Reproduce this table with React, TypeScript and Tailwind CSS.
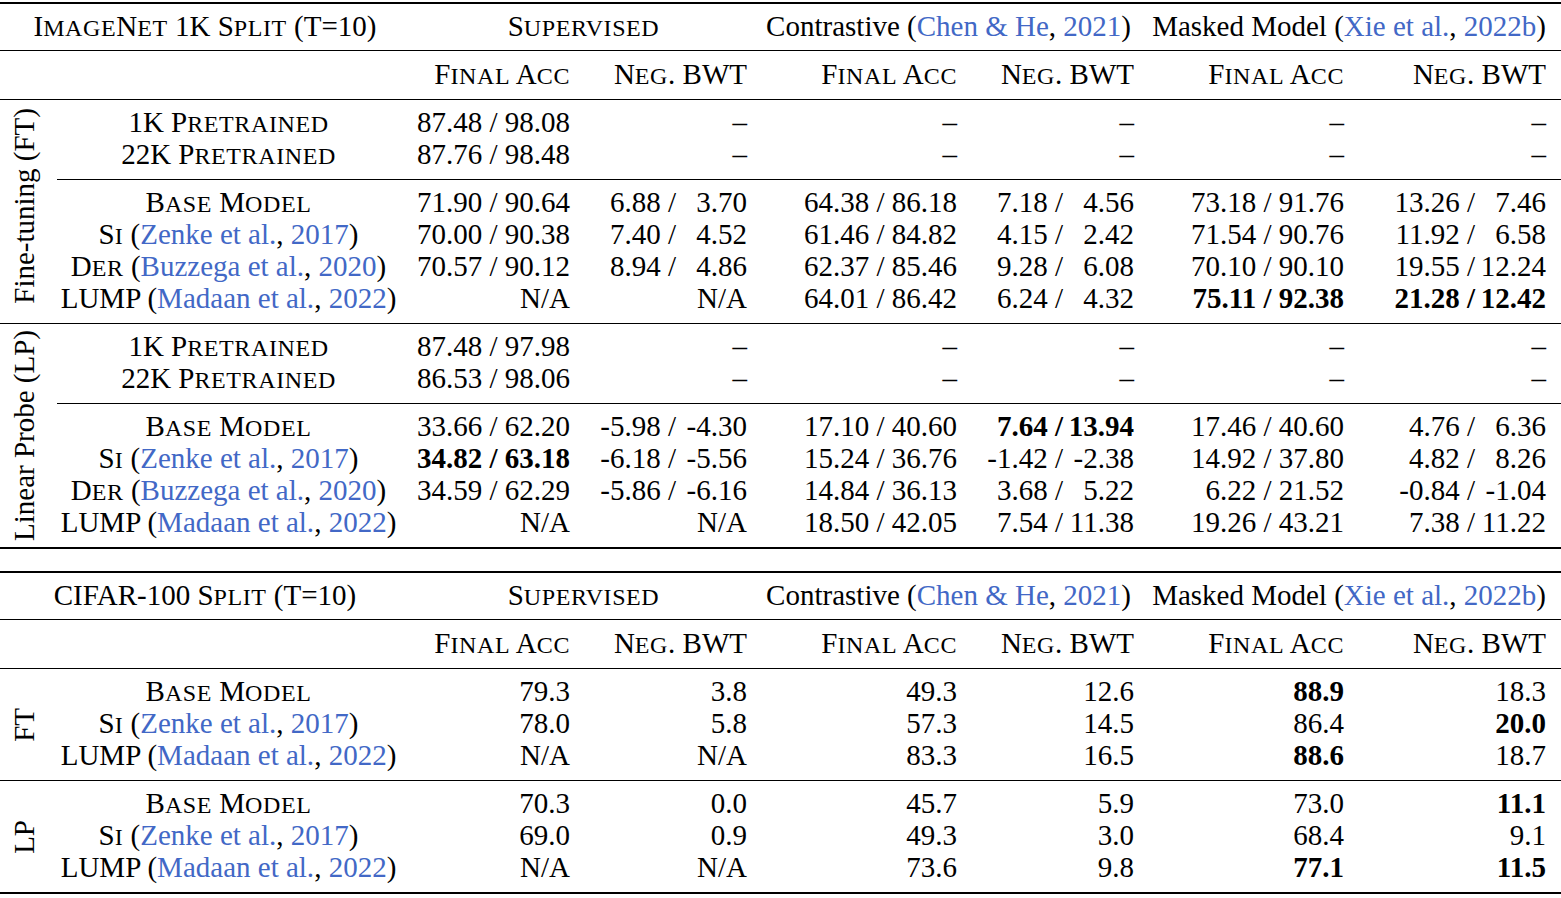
import React from 'react'

type Row = { label: React.ReactNode; cells: string[] }

const BLUE = 'text-[#4268c6]'

// small caps, the way LaTeX sets them: capitals full size, the rest as smaller capitals
function SC({ t }: { t: string }) {
  const parts = t.split(/([a-z]+)/)
  return (
    <>
      {parts.map((p, i) =>
        /^[a-z]+$/.test(p) ? (
          <span key={i} className="text-[24px] uppercase tracking-[0.6px]">
            {p}
          </span>
        ) : (
          <span key={i}>{p}</span>
        )
      )}
    </>
  )
}

function Cite({ who, year }: { who: string; year: string }) {
  return (
    <>
      {' ('}
      <span className={BLUE}>{who}</span>
      {', '}
      <span className={BLUE}>{year}</span>
      {')'}
    </>
  )
}

const si = (
  <>
    <SC t="Si" />
    <Cite who="Zenke et al." year="2017" />
  </>
)
const der = (
  <>
    <SC t="Der" />
    <Cite who="Buzzega et al." year="2020" />
  </>
)
const lump = (
  <>
    LUMP
    <Cite who="Madaan et al." year="2022" />
  </>
)
const base = <SC t="Base Model" />
const pre1k = <SC t="1K Pretrained" />
const pre22k = <SC t="22K Pretrained" />

const D = '–'

const ftTop: Row[] = [
  { label: pre1k, cells: ['87.48 / 98.08', D, D, D, D, D] },
  { label: pre22k, cells: ['87.76 / 98.48', D, D, D, D, D] },
]
const ftBottom: Row[] = [
  { label: base, cells: ['71.90 / 90.64', '6.88 / 3.70', '64.38 / 86.18', '7.18 / 4.56', '73.18 / 91.76', '13.26 / 7.46'] },
  { label: si, cells: ['70.00 / 90.38', '7.40 / 4.52', '61.46 / 84.82', '4.15 / 2.42', '71.54 / 90.76', '11.92 / 6.58'] },
  { label: der, cells: ['70.57 / 90.12', '8.94 / 4.86', '62.37 / 85.46', '9.28 / 6.08', '70.10 / 90.10', '19.55 / 12.24'] },
  { label: lump, cells: ['N/A', 'N/A', '64.01 / 86.42', '6.24 / 4.32', '*75.11 / 92.38', '*21.28 / 12.42'] },
]
const lpTop: Row[] = [
  { label: pre1k, cells: ['87.48 / 97.98', D, D, D, D, D] },
  { label: pre22k, cells: ['86.53 / 98.06', D, D, D, D, D] },
]
const lpBottom: Row[] = [
  { label: base, cells: ['33.66 / 62.20', '-5.98 / -4.30', '17.10 / 40.60', '*7.64 / 13.94', '17.46 / 40.60', '4.76 / 6.36'] },
  { label: si, cells: ['*34.82 / 63.18', '-6.18 / -5.56', '15.24 / 36.76', '-1.42 / -2.38', '14.92 / 37.80', '4.82 / 8.26'] },
  { label: der, cells: ['34.59 / 62.29', '-5.86 / -6.16', '14.84 / 36.13', '3.68 / 5.22', '6.22 / 21.52', '-0.84 / -1.04'] },
  { label: lump, cells: ['N/A', 'N/A', '18.50 / 42.05', '7.54 / 11.38', '19.26 / 43.21', '7.38 / 11.22'] },
]
const cifarFt: Row[] = [
  { label: base, cells: ['79.3', '3.8', '49.3', '12.6', '*88.9', '18.3'] },
  { label: si, cells: ['78.0', '5.8', '57.3', '14.5', '86.4', '*20.0'] },
  { label: lump, cells: ['N/A', 'N/A', '83.3', '16.5', '*88.6', '18.7'] },
]
const cifarLp: Row[] = [
  { label: base, cells: ['70.3', '0.0', '45.7', '5.9', '73.0', '*11.1'] },
  { label: si, cells: ['69.0', '0.9', '49.3', '3.0', '68.4', '9.1'] },
  { label: lump, cells: ['N/A', 'N/A', '73.6', '9.8', '*77.1', '*11.5'] },
]

const colW = ['w-[160px]', 'w-[177px]', 'w-[210px]', 'w-[177px]', 'w-[210px]', 'w-[202px]']

function Cell({ v, idx }: { v: string; idx: number }) {
  const bold = v.startsWith('*')
  const text = bold ? v.slice(1) : v
  const isBwt = idx % 2 === 1
  if (isBwt && text.includes(' / ')) {
    const [a, b] = text.split(' / ')
    return (
      <div className={`${colW[idx]} flex justify-end ${bold ? 'font-bold' : ''}`}>
        <span className="whitespace-pre">{a} /</span>
        <span className="w-[71px] text-right">{b}</span>
      </div>
    )
  }
  return <div className={`${colW[idx]} text-right whitespace-pre ${bold ? 'font-bold' : ''}`}>{text}</div>
}

function DataRow({ row }: { row: Row }) {
  return (
    <div className="flex h-8 leading-8">
      <div className="w-[363px] text-center whitespace-nowrap">{row.label}</div>
      {row.cells.map((c, i) => (
        <Cell key={i} v={c} idx={i} />
      ))}
    </div>
  )
}

function Rows({ rows }: { rows: Row[] }) {
  return (
    <div className="pt-[6px] pb-[9px]">
      {rows.map((r, i) => (
        <DataRow key={i} row={r} />
      ))}
    </div>
  )
}

function Block({ side, parts, lift }: { side: string; parts: Row[][]; lift?: boolean }) {
  return (
    <div className="flex">
      <div className="w-[47px] flex items-center justify-center">
        <div className={`[writing-mode:vertical-rl] rotate-180 leading-8 whitespace-nowrap ${lift ? 'mb-[12px]' : ''}`}>
          {side}
        </div>
      </div>
      <div className="flex-1">
        {parts.map((p, i) => (
          <div key={i}>
            {i > 0 && <div className="ml-[10px] h-px bg-black" />}
            <Rows rows={p} />
          </div>
        ))}
      </div>
    </div>
  )
}

function Header({ title }: { title: string }) {
  return (
    <>
      <div className="h-[2px] bg-black" />
      <div className="flex h-8 leading-8 mt-[6px] mb-[8px] whitespace-nowrap">
        <div className="w-[410px] text-center">
          <SC t={title} />
        </div>
        <div className="w-[337px] text-center pl-[10px]">
          <SC t="Supervised" />
        </div>
        <div className="w-[387px] text-right pr-[3px]">
          Contrastive
          <Cite who="Chen & He" year="2021" />
        </div>
        <div className="w-[412px] text-right">
          Masked Model
          <Cite who="Xie et al." year="2022b" />
        </div>
      </div>
      <div className="h-px bg-black" />
      <div className="flex h-8 leading-8 mt-[7px] mb-[9px] whitespace-nowrap">
        <div className="w-[410px]" />
        {colW.map((w, i) => (
          <div key={i} className={`${w} text-right`}>
            <SC t={i % 2 === 0 ? 'Final Acc' : 'Neg. BWT'} />
          </div>
        ))}
      </div>
      <div className="h-px bg-black" />
    </>
  )
}

export default function App() {
  return (
    <div className="w-[1561px] h-[898px] bg-white text-black text-[29px] font-['Liberation_Serif','Times_New_Roman',serif] overflow-hidden">
      <div className="pt-[2px]">
        <Header title="ImageNet 1K Split (T=10)" />
        <Block side="Fine-tuning (FT)" parts={[ftTop, ftBottom]} lift />
        <div className="h-px bg-black" />
        <Block side="Linear Probe (LP)" parts={[lpTop, lpBottom]} />
        <div className="h-[2px] bg-black" />
      </div>
      <div className="mt-[22px]">
        <Header title="CIFAR-100 Split (T=10)" />
        <Block side="FT" parts={[cifarFt]} />
        <div className="h-px bg-black" />
        <Block side="LP" parts={[cifarLp]} />
        <div className="h-[2px] bg-black" />
      </div>
    </div>
  )
}
